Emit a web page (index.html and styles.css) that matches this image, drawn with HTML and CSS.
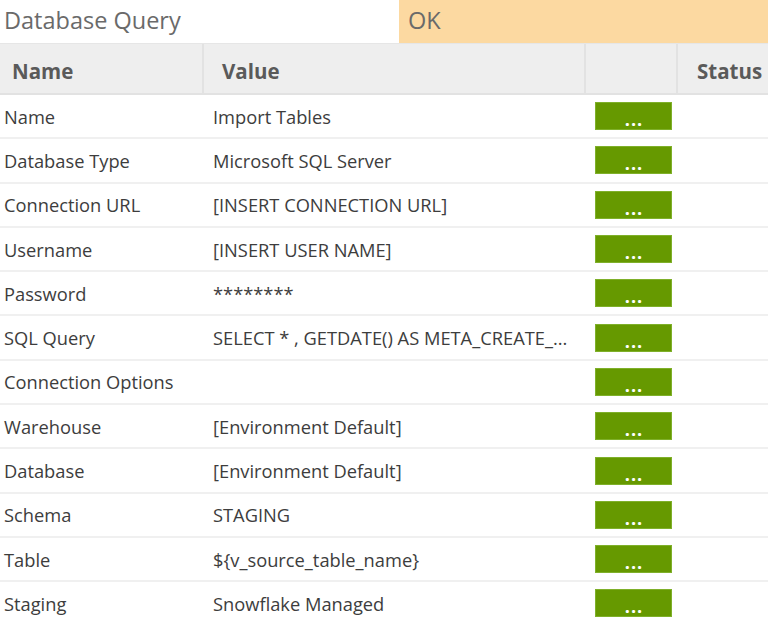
FILE: index.html
```html
<!DOCTYPE html>
<html>
<head>
<meta charset="utf-8">
<link rel="stylesheet" href="styles.css">
</head>
<body>
<div class="titlebar">
  <div class="title">Database Query</div>
  <div class="status-ok">OK</div>
</div>
<table class="grid">
  <colgroup>
    <col class="c-name"><col class="c-value"><col class="c-btn"><col class="c-status">
  </colgroup>
  <thead>
    <tr><th>Name</th><th class="th-value">Value</th><th></th><th class="th-status">Status</th></tr>
  </thead>
  <tbody>
    <tr><td class="n">Name</td><td class="v">Import Tables</td><td class="b"><span class="btn">...</span></td><td></td></tr>
    <tr><td class="n">Database Type</td><td class="v">Microsoft SQL Server</td><td class="b"><span class="btn">...</span></td><td></td></tr>
    <tr><td class="n">Connection URL</td><td class="v">[INSERT CONNECTION URL]</td><td class="b"><span class="btn">...</span></td><td></td></tr>
    <tr><td class="n">Username</td><td class="v">[INSERT USER NAME]</td><td class="b"><span class="btn">...</span></td><td></td></tr>
    <tr><td class="n">Password</td><td class="v">********</td><td class="b"><span class="btn">...</span></td><td></td></tr>
    <tr><td class="n">SQL Query</td><td class="v">SELECT * , GETDATE() AS META_CREATE_...</td><td class="b"><span class="btn">...</span></td><td></td></tr>
    <tr><td class="n">Connection Options</td><td class="v"></td><td class="b"><span class="btn">...</span></td><td></td></tr>
    <tr><td class="n">Warehouse</td><td class="v">[Environment Default]</td><td class="b"><span class="btn">...</span></td><td></td></tr>
    <tr><td class="n">Database</td><td class="v">[Environment Default]</td><td class="b"><span class="btn">...</span></td><td></td></tr>
    <tr><td class="n">Schema</td><td class="v">STAGING</td><td class="b"><span class="btn">...</span></td><td></td></tr>
    <tr><td class="n">Table</td><td class="v">${v_source_table_name}</td><td class="b"><span class="btn">...</span></td><td></td></tr>
    <tr><td class="n">Staging</td><td class="v">Snowflake Managed</td><td class="b"><span class="btn">...</span></td><td></td></tr>
  </tbody>
</table>
</body>
</html>
```
FILE: styles.css
```css
html, body {
  margin: 0;
  padding: 0;
  background: #ffffff;
  overflow: hidden;
}
body {
  font-family: "Open Sans", "Noto Sans", sans-serif;
  color: #3a3a3a;
  width: 768px;
}
.titlebar {
  display: flex;
  height: 43px;
  border-bottom: 1px solid #e6e6e6;
}
.title {
  width: 399px;
  padding-left: 4px;
  box-sizing: border-box;
  font-size: 23.5px;
  line-height: 40px;
  color: #6a6a6a;
}
.status-ok {
  flex: 1;
  background: #fcd9a1;
  padding-left: 9px;
  font-size: 23.5px;
  line-height: 40px;
  color: #6a6a6a;
}
.grid {
  border-collapse: collapse;
  table-layout: fixed;
  width: 780px;
}
.c-name { width: 203px; }
.c-value { width: 382px; }
.c-btn { width: 92px; }
.c-status { width: 103px; }
.grid th {
  background: #eeeeee;
  height: 50px;
  padding: 4px 0 0 12px;
  box-sizing: border-box;
  text-align: left;
  font-size: 20.5px;
  font-weight: 700;
  color: #5a5a5a;
  border-right: 2px solid #e2e2e2;
  border-bottom: 2px solid #e2e2e2;
}
.grid th.th-value { padding-left: 18px; }
.grid th.th-status { padding-left: 19px; }
.grid td {
  height: 44.3px;
  box-sizing: border-box;
  padding: 0;
  font-size: 18.3px;
  color: #3d3d3d;
  border-bottom: 2px solid #f0f0f0;
  white-space: nowrap;
  overflow: hidden;
}
.grid td.n { padding-left: 4px; }
.grid td.v { padding-left: 10px; }
.grid td.b { padding-left: 10px; }
.btn {
  display: block;
  width: 77px;
  height: 28px;
  padding-top: 7px;
  background: #669900;
  color: #ffffff;
  font-size: 18px;
  font-weight: 700;
  letter-spacing: 1px;
  text-indent: 1px;
  text-align: center;
  line-height: 18px;
  box-sizing: border-box;
  border: 1px solid #7fb02a;
}
```
